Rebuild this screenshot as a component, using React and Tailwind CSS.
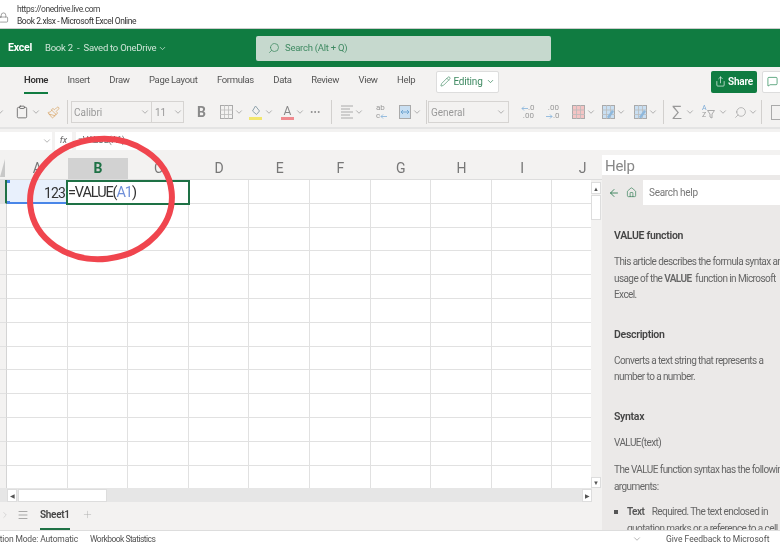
import {
  ArrowLeft,
  ChevronDown,
  ChevronRight,
  Clipboard,
  Ellipsis,
  Home,
  Lock,
  Menu,
  MessageSquare,
  Paintbrush,
  Pencil,
  Plus,
  Search,
  Share,
} from 'lucide-react';

const font = 'font-["Roboto","Liberation_Sans",sans-serif]';
const tabs = ['Home', 'Insert', 'Draw', 'Page Layout', 'Formulas', 'Data', 'Review', 'View', 'Help'];
const columns = ['A', 'B', 'C', 'D', 'E', 'F', 'G', 'H', 'I', 'J'];
const rows = Array.from({ length: 13 }, (_, i) => i);

function Chev({ className = '' }) {
  return <ChevronDown size={10} strokeWidth={1.5} className={`shrink-0 text-[#888] ${className}`} />;
}

function GridIcon({ cells = 'none' }) {
  return (
    <svg width="13" height="14" viewBox="0 0 13 14" className="shrink-0">
      <rect x="0.5" y="0.5" width="12" height="13" fill={cells === 'red' ? '#f4c4c4' : cells === 'blue' ? '#c9dff2' : 'none'} stroke="#aaa" />
      <path d="M0 5h13M0 9.5h13M4.5 0v14M8.5 0v14" stroke="#bbb" strokeWidth="0.8" />
      {cells === 'blue' && <path d="M5 12l5-7 2 1.5-5 7z" fill="#8fb8dc" />}
    </svg>
  );
}

function DecimalArrow({ flip = false }) {
  return (
    <svg width="7" height="5" viewBox="0 0 7 5" className={`shrink-0 ${flip ? '-scale-x-100' : ''}`}>
      <path d="M7 2.5H1M3 0.5l-2 2 2 2" fill="none" stroke="#8fb8dc" strokeWidth="0.9" />
    </svg>
  );
}

function Divider({ className = '' }) {
  return <div className={`h-[24px] w-px shrink-0 bg-[#d2d0ce] ${className}`} />;
}

function Toolbar() {
  return (
    <div className="flex h-[30px] items-center overflow-hidden bg-[#f3f2f1] text-[#999]">
      <Chev className="-ml-[5px]" />
      <Clipboard size={14} strokeWidth={1.3} className="ml-[10px] shrink-0 text-[#555]" />
      <Chev className="ml-[2px]" />
      <Paintbrush size={13} strokeWidth={1.4} className="ml-[6px] shrink-0 text-[#d9a66a]" />
      <Divider className="ml-[7px]" />
      <div className="ml-[3px] flex h-[22px] w-[113px] shrink-0 items-center border border-[#d6d4d2] text-[10px]">
        <span className="w-[68px] pl-[2px]">Calibri</span>
        <Chev />
        <span className="ml-[1px] h-full w-px bg-[#d6d4d2]" />
        <span className="ml-[3px] w-[18px]">11</span>
        <Chev />
      </div>
      <span className="ml-[13px] w-[12px] text-[14px] font-bold text-[#8a8a8a]">B</span>
      <div className="ml-[14px] shrink-0"><GridIcon /></div>
      <Chev className="ml-[1px]" />
      <div className="ml-[5px] flex h-[15px] w-[13px] shrink-0 flex-col items-center justify-between">
        <svg width="11" height="11" viewBox="0 0 11 11"><path d="M5.5 1l4 5-3 3.5-4-3.5z" fill="none" stroke="#8fa3ad" /></svg>
        <div className="h-[3px] w-[13px] bg-[#f2e66d]" />
      </div>
      <Chev className="ml-[2px]" />
      <div className="ml-[7px] flex h-[15px] w-[13px] shrink-0 flex-col items-center justify-between leading-[12px]">
        <span className="text-[12px] text-[#888]">A</span>
        <div className="h-[3px] w-[13px] bg-[#f08a8f]" />
      </div>
      <Chev className="ml-[1px]" />
      <Ellipsis size={12} className="ml-[4px] shrink-0 text-[#888]" />
      <Divider className="ml-[10px]" />
      <svg width="12" height="14" viewBox="0 0 12 14" className="ml-[9px] shrink-0"><path d="M0 1h12M0 4h9M0 7h12M0 10h9M0 13h12" stroke="#aaa" /></svg>
      <Chev className="ml-[1px]" />
      <div className="ml-[12px] flex w-[12px] shrink-0 flex-col text-[8px] leading-[8px] text-[#999]">
        <span>ab</span>
        <span className="flex items-center">c<DecimalArrow /></span>
      </div>
      <div className="ml-[11px] flex h-[14px] w-[12px] shrink-0 items-center justify-center border border-[#aaa] bg-[#c9dff2]">
        <svg width="8" height="6" viewBox="0 0 8 6"><path d="M0 3h8M2 1L0 3l2 2M6 1l2 2-2 2" fill="none" stroke="#6aa2cf" strokeWidth="0.9" /></svg>
      </div>
      <Chev className="ml-[1px]" />
      <Divider className="ml-[4px]" />
      <div className="ml-[1px] flex h-[22px] w-[81px] shrink-0 items-center justify-between border border-[#d6d4d2] pl-[2px] pr-[2px] text-[10px]">
        General<Chev />
      </div>
      <div className="ml-[12px] w-[13px] shrink-0 text-[8px] leading-[8px] text-[#999]">
        <span className="flex items-center"><DecimalArrow />.0</span>
        <span className="block text-right">.00</span>
      </div>
      <div className="ml-[12px] w-[13px] shrink-0 text-[8px] leading-[8px] text-[#999]">
        <span className="block text-right">.00</span>
        <span className="flex items-center"><DecimalArrow flip />.0</span>
      </div>
      <div className="ml-[13px] shrink-0"><GridIcon cells="red" /></div>
      <Chev className="ml-[1px]" />
      <div className="ml-[6px] shrink-0"><GridIcon cells="blue" /></div>
      <Chev className="ml-[1px]" />
      <div className="ml-[8px] shrink-0"><GridIcon cells="blue" /></div>
      <Chev className="ml-[1px]" />
      <Divider className="ml-[5px]" />
      <span className="ml-[8px] w-[11px] shrink-0 text-[16px] leading-none text-[#999]">∑</span>
      <Chev className="ml-[2px]" />
      <div className="ml-[7px] flex w-[15px] shrink-0 items-end text-[7px] leading-[7px]">
        <span className="flex flex-col"><span className="text-[#7aa9d6]">A</span><span>Z</span></span>
        <svg width="8" height="9" viewBox="0 0 8 9"><path d="M0.5 0.5h7L5 4v4L3 7V4z" fill="none" stroke="#aaa" /></svg>
      </div>
      <Chev className="ml-[1px]" />
      <Search size={13} strokeWidth={1.2} className="ml-[6px] shrink-0 -scale-x-100 text-[#999]" />
      <Chev className="ml-[1px]" />
      <Divider className="ml-[3px]" />
      <div className="ml-[9px] h-[15px] w-[13px] shrink-0 border border-[#aaa]" />
    </div>
  );
}

function Sheet() {
  return (
    <div className="flex h-[308px] w-[602px]">
      <div className="relative flex w-[591px] flex-col overflow-hidden bg-white">
        {rows.map((r) => (
          <div key={r} className="flex h-[23.8px] shrink-0">
            <div className={`h-full w-[7px] shrink-0 border-b border-[#e1e1e1] ${r === 0 ? 'border-r-2 border-r-[#1e7145] bg-[#e1e1e1]' : 'border-r border-r-[#d4d4d4] bg-[#f3f2f1]'}`} />
            {columns.map((c) => (
              <div key={c} className={`h-full w-[60.6px] shrink-0 border-b border-r border-[#e1e1e1] ${r === 0 && c === 'A' ? 'bg-[#e8f0fc]' : ''}`} />
            ))}
          </div>
        ))}
        {/* selected cells over the grid */}
        <div className="absolute left-[7px] top-[22px] h-[2px] w-[60px] bg-[#4a86e8]" />
        <div className="absolute left-[7px] top-0 h-[3px] w-[3px] bg-[#4a86e8]" />
        <div className="absolute left-[7px] top-[21px] h-[3px] w-[3px] bg-[#4a86e8]" />
        <div className="absolute left-[6px] top-0 h-[23px] w-[59px] text-right text-[14px] leading-[26px] tracking-[-0.9px] text-[#333]">123</div>
        <div className="absolute left-[66px] top-0 flex h-[25px] w-[124px] items-center border-2 border-[#1e7145] bg-white text-[14.5px] tracking-[-1.1px] text-[#333]">
          =VALUE(<span className="text-[#6f8fd8]">A1</span>)
        </div>
      </div>
      <div className="flex w-[11px] flex-col bg-[#f3f2f1]">
        <div className="mt-[2px] flex h-[12px] w-[10px] items-center justify-center border border-[#ddd] bg-white text-[6px] text-[#555]">▲</div>
        <div className="mt-px h-[25px] w-[10px] border border-[#ddd] bg-white" />
        <div className="mt-auto flex h-[11px] w-[10px] items-center justify-center border border-[#ddd] bg-white text-[6px] text-[#555]">▼</div>
      </div>
    </div>
  );
}

function HelpPane() {
  const body = 'text-[10px] leading-[16.5px] tracking-[-0.58px] text-[#666]';
  const heading = 'text-[10.5px] font-semibold tracking-[-0.3px] text-[#444]';
  return (
    <div className="flex w-[178px] shrink-0 flex-col">
      <div className="h-[20px] pl-[3px] text-[15px] leading-[22px] tracking-[-0.3px] text-[#888]">Help</div>
      <div className="h-[355px] overflow-hidden bg-[#ebe9e8]">
        <div className="flex h-[30px] items-center pl-[6px] pt-[5px]">
          <ArrowLeft size={12} strokeWidth={1.6} className="text-[#1e7145]" />
          <Home size={11} strokeWidth={1.3} className="ml-[6px] text-[#1e7145]" />
          <div className="ml-[6px] flex h-[25px] flex-1 items-center bg-white pl-[6px] text-[10px] tracking-[-0.3px] text-[#777]">Search help</div>
        </div>
        <div className="w-[190px] pl-[12px] pt-[24px]">
          <h2 className={`${heading} leading-[14px]`}>VALUE function</h2>
          <p className={`${body} mt-[11px] whitespace-nowrap`}>
            This article describes the formula syntax and<br />
            usage of the <b className="font-semibold">VALUE</b>&nbsp; function in Microsoft<br />
            Excel.
          </p>
          <h2 className={`${heading} mt-[24px] leading-[14px]`}>Description</h2>
          <p className={`${body} mt-[11px] whitespace-nowrap`}>
            Converts a text string that represents a<br />
            number to a number.
          </p>
          <h2 className={`${heading} mt-[24px] leading-[14px]`}>Syntax</h2>
          <p className={`${body} mt-[11px]`}>VALUE(text)</p>
          <p className={`${body} mt-[11px] whitespace-nowrap`}>
            The VALUE function syntax has the following<br />
            arguments:
          </p>
          <div className={`${body} mt-[9px] flex whitespace-nowrap`}>
            <span className="mt-[6px] h-[4px] w-[4px] shrink-0 bg-[#555]" />
            <p className="ml-[9px]">
              <b className="font-semibold text-[#555]">Text</b>&nbsp;&nbsp;&nbsp; Required. The text enclosed in<br />
              quotation marks or a reference to a cell
            </p>
          </div>
        </div>
      </div>
    </div>
  );
}

export default function App() {
  return (
    <div className={`relative h-[547px] w-[780px] overflow-hidden bg-white blur-[0.4px] ${font}`}>
      {/* browser title */}
      <div className="flex h-[29px] items-center border-b border-[#ccc] pt-[1px]">
        <Lock size={11} strokeWidth={1.3} className="-ml-[2px] mt-[6px] shrink-0 text-[#666]" />
        <div className="ml-[8px] text-[8.5px] leading-[12px] tracking-[-0.43px] text-[#333]">
          <div className="text-[#444]">https://onedrive.live.com</div>
          <div>Book 2.xlsx - Microsoft Excel Online</div>
        </div>
      </div>

      {/* app bar */}
      <div className="flex h-[38px] items-center bg-[#107c41] text-white">
        <span className="ml-[8px] w-[37px] text-[10.5px] font-bold tracking-[-0.2px]">Excel</span>
        <span className="w-[113px] text-[9.5px] tracking-[-0.25px] whitespace-nowrap text-[#cfe5d8]">Book 2&nbsp; -&nbsp; Saved to OneDrive</span>
        <ChevronDown size={9} className="text-[#cfe5d8]" />
        <div className="ml-[89px] flex h-[25px] w-[295px] items-center rounded-[2px] bg-[#c6d9ce] pl-[12px] text-[9.5px] tracking-[-0.25px] text-[#3f8a62]">
          <Search size={12} strokeWidth={1.5} className="-scale-x-100" />
          <span className="ml-[5px]">Search (Alt + Q)</span>
        </div>
      </div>

      {/* ribbon */}
      <div className="flex h-[30px] items-center bg-[#f3f2f1] pb-[1px] pl-[24px] whitespace-nowrap">
        <div className="-mt-[2px] flex w-[412px] shrink-0 gap-[19.5px] text-[9.5px] tracking-[-0.35px] text-[#555]">
          {tabs.map((t) =>
            t === 'Home' ? (
              <span key={t} className="relative font-semibold text-[#333]">
                {t}
                <span className="absolute -bottom-[6px] left-0 h-[2px] w-full bg-[#107c41]" />
              </span>
            ) : (
              <span key={t}>{t}</span>
            ),
          )}
        </div>
        <div className="flex h-[22px] w-[63px] shrink-0 items-center justify-center rounded-[2px] border border-[#ddd] bg-white text-[10px] tracking-[-0.2px] text-[#3f8a62]">
          <Pencil size={11} strokeWidth={1.4} />
          <span className="ml-[2px]">Editing</span>
          <ChevronDown size={9} className="ml-[3px]" />
        </div>
        <div className="ml-[212px] flex h-[22px] w-[46px] shrink-0 items-center justify-center rounded-[2px] bg-[#107c41] text-[10px] font-semibold tracking-[-0.2px] text-white">
          <Share size={11} strokeWidth={1.4} />
          <span className="ml-[2px]">Share</span>
        </div>
        <div className="ml-[5px] flex h-[22px] w-[30px] shrink-0 items-center rounded-[2px] border border-[#ddd] bg-white pl-[4px] text-[#107c41]">
          <MessageSquare size={11} strokeWidth={1.4} />
        </div>
      </div>
      <Toolbar />

      {/* formula bar */}
      <div className="flex h-[28px] items-center gap-[3px] border-t-2 border-[#e4e4e4] bg-[#f3f2f1] pb-[2px]">
        <div className="flex h-[18px] w-[52px] items-center justify-end bg-white"><Chev /></div>
        <div className="flex h-[18px] w-[17px] items-center justify-center bg-white text-[9px] italic text-[#666]">fx</div>
        <div className="ml-px flex h-[18px] flex-1 items-center bg-white pl-[2px] text-[9px] tracking-[-0.2px] text-[#666]">=VALUE(A1)</div>
      </div>

      <div className="flex">
        <div className="flex w-[602px] flex-col">
          {/* column headers */}
          <div className="flex h-[25px] items-end overflow-hidden border-b border-[#ddd] bg-[#f3f2f1]">
            <div className="flex h-full w-[7px] shrink-0 items-end">
              <div className="mb-[2px] h-0 w-0 border-b-[18px] border-l-[5px] border-b-[#c8c8c8] border-l-transparent" />
            </div>
            {columns.map((c) => (
              <div
                key={c}
                className={`flex h-[21px] w-[60.6px] shrink-0 items-center justify-center text-[14px] ${c === 'B' ? 'bg-[#d2d2d2] font-bold text-[#1e7145]' : 'text-[#777]'}`}
              >
                {c}
              </div>
            ))}
          </div>
          <Sheet />
          {/* horizontal scrollbar */}
          <div className="flex h-[14px] bg-[#f3f2f1]">
            <div className="flex w-[592px] items-center bg-[#e6e6e6] pl-[7px]">
              <div className="flex h-[13px] w-[10px] items-center justify-center border border-[#ddd] bg-white text-[6px] text-[#555]">◀</div>
              <div className="ml-px h-[13px] w-[89px] border border-[#ddd] bg-white" />
              <div className="ml-auto flex h-[13px] w-[10px] items-center justify-center border border-[#ddd] bg-white text-[6px] text-[#555]">▶</div>
            </div>
          </div>
          {/* sheet tabs */}
          <div className="flex h-[28px] items-center bg-[#f3f2f1] pb-[3px] text-[#777]">
            <ChevronRight size={10} strokeWidth={1.2} className="text-[#bbb]" />
            <Menu size={12} strokeWidth={1.2} className="ml-[7px]" />
            <div className="relative ml-[11px] text-[10px] font-semibold tracking-[-0.3px] text-[#444]">
              Sheet1
              <span className="absolute -bottom-[8px] left-0 h-[2px] w-full bg-[#1e7145]" />
            </div>
            <Plus size={11} strokeWidth={1} className="ml-[12px] text-[#aaa]" />
          </div>
        </div>
        <HelpPane />
      </div>

      {/* status bar */}
      <div className="flex h-[17px] items-center overflow-hidden border-t border-[#ddd] bg-white text-[8.5px] whitespace-nowrap text-[#555]">
        <div className="flex w-[78px] shrink-0 justify-end overflow-hidden tracking-[-0.15px]">
          <span className="shrink-0">Calculation Mode: Automatic</span>
        </div>
        <span className="ml-[12px] w-[542px] shrink-0 tracking-[-0.55px]">Workbook Statistics</span>
        <Chev />
        <span className="ml-[24px]">Give Feedback to Microsoft</span>
      </div>

      {/* red annotation */}
      <svg className="pointer-events-none absolute left-[24px] top-[132px]" width="156" height="134" viewBox="0 0 156 134">
        <ellipse cx="77" cy="67" rx="71" ry="60" fill="none" stroke="#f0454e" strokeWidth="6" transform="rotate(-6 77 67)" />
      </svg>
    </div>
  );
}
